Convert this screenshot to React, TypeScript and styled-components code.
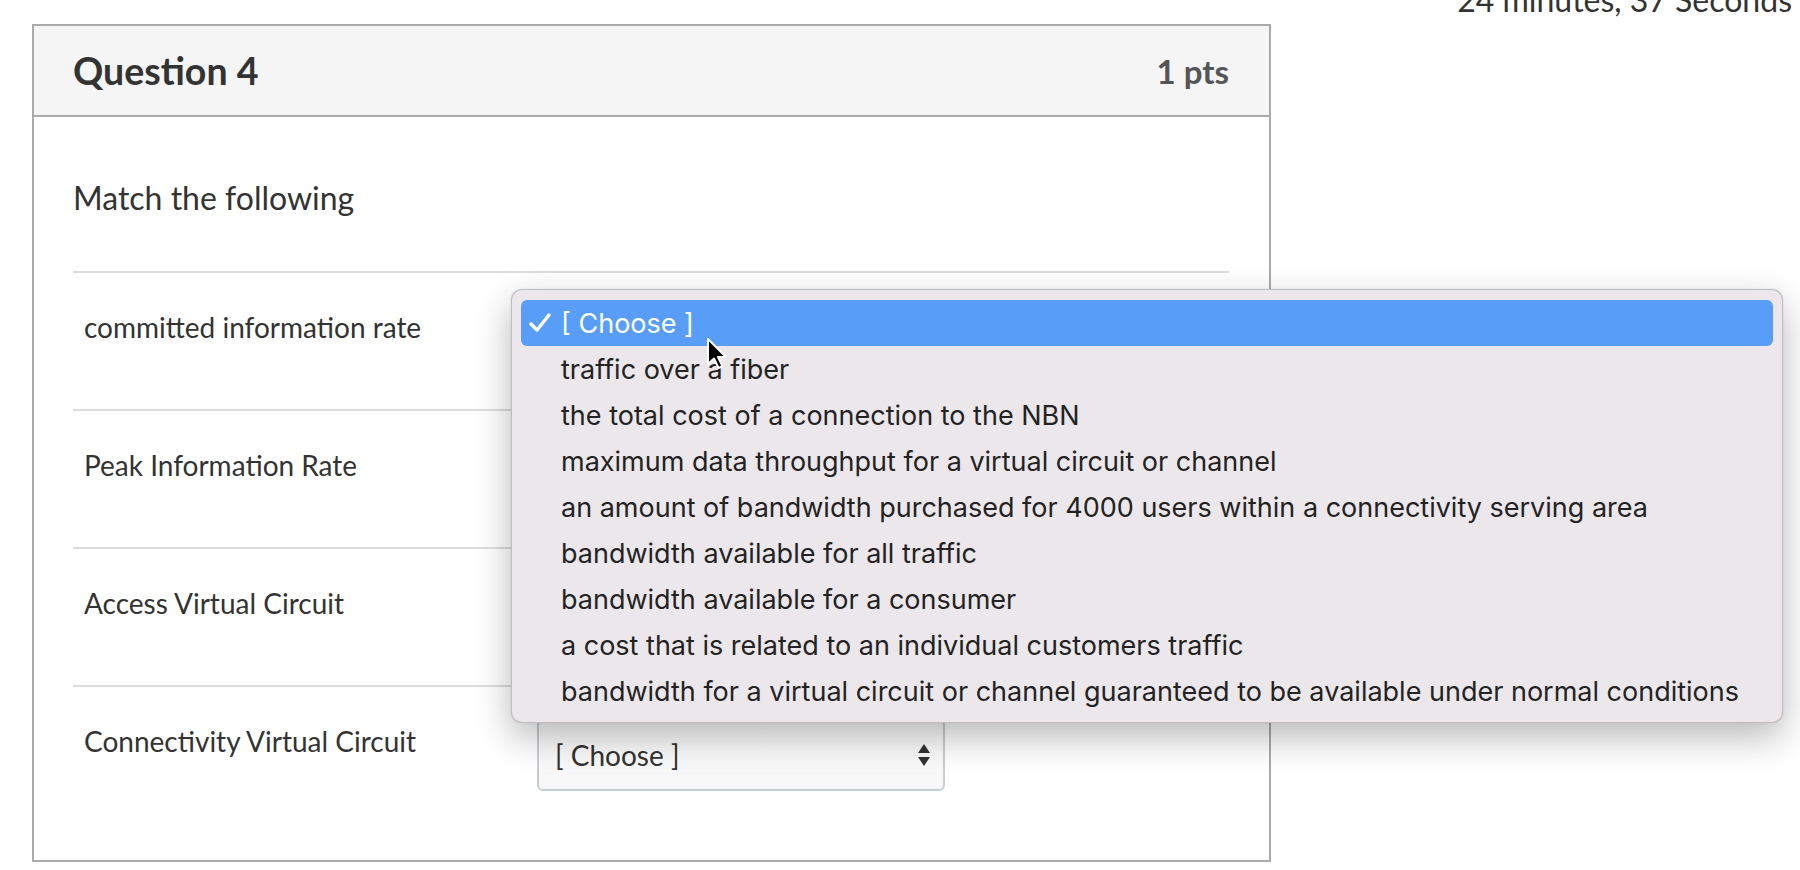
import React from "react";
import styled, { createGlobalStyle } from "styled-components";

const GlobalStyle = createGlobalStyle`
  html, body {
    margin: 0;
    padding: 0;
    background: #fff;
  }
  body {
    font-family: Lato, "Open Sans", sans-serif;
    color: #2d3b45;
  }
`;

type Row = { label: string };

const rows: Row[] = [
  { label: "committed information rate" },
  { label: "Peak Information Rate" },
  { label: "Access Virtual Circuit" },
  { label: "Connectivity Virtual Circuit" },
];

const options = [
  "[ Choose ]",
  "traffic over a fiber",
  "the total cost of a connection to the NBN",
  "maximum data throughput for a virtual circuit or channel",
  "an amount of bandwidth purchased for 4000 users within a connectivity serving area",
  "bandwidth available for all traffic",
  "bandwidth available for a consumer",
  "a cost that is related to an individual customers traffic",
  "bandwidth for a virtual circuit or channel guaranteed to be available under normal conditions",
];

const SelectArrows = () => (
  <svg width="14" height="24" viewBox="0 0 14 24">
    <path d="M7 1 L13 10 L1 10 Z" fill="#333" />
    <path d="M7 23 L13 14 L1 14 Z" fill="#333" />
  </svg>
);

const Check = () => (
  <svg width="22" height="20" viewBox="0 0 22 20">
    <path
      d="M2 11 L8 17 L20 2"
      fill="none"
      stroke="#fff"
      strokeWidth="3.4"
      strokeLinecap="round"
      strokeLinejoin="round"
    />
  </svg>
);

const Pointer = () => (
  <svg width="24" height="34" viewBox="0 0 24 34">
    <path
      d="M2 2 L2 27 L8 21.5 L12.5 31 L16.5 29.2 L12 20 L20 20 Z"
      fill="#000"
      stroke="#fff"
      strokeWidth="2"
      strokeLinejoin="round"
    />
  </svg>
);

export default function App() {
  return (
    <>
      <GlobalStyle />
      <Page>
        <TimerBar>
          <Timer>24 minutes, 37 Seconds</Timer>
        </TimerBar>
        <Card>
          <Header>
            <Title>Question 4</Title>
            <Points>1 pts</Points>
          </Header>
          <Body>
            <Prompt>Match the following</Prompt>
            {rows.map((row, i) => (
              <MatchRow key={row.label}>
                <Label>{row.label}</Label>
                <SelectCell>
                  <SelectBox $covered={i < 3}>
                    <span>[ Choose ]</span>
                    <SelectArrows />
                  </SelectBox>
                  {i === 0 && (
                    <Popup>
                      {options.map((opt, k) => (
                        <Option key={opt} $active={k === 0}>
                          <CheckSlot>{k === 0 && <Check />}</CheckSlot>
                          {opt}
                        </Option>
                      ))}
                      <Cursor>
                        <Pointer />
                      </Cursor>
                    </Popup>
                  )}
                </SelectCell>
              </MatchRow>
            ))}
          </Body>
        </Card>
      </Page>
    </>
  );
}

const Page = styled.div`
  width: 1800px;
  height: 870px;
  overflow: hidden;
  display: flex;
  flex-direction: column;
  padding-left: 32px;
  box-sizing: border-box;
`;

const TimerBar = styled.div`
  height: 24px;
  display: flex;
  justify-content: flex-end;
  align-items: flex-end;
  overflow: hidden;
  padding-right: 8px;
`;

const Timer = styled.div`
  font-size: 32px;
  line-height: 40px;
  margin-bottom: 4px;
  color: #333;
  white-space: nowrap;
`;

const Card = styled.div`
  width: 1239px;
  height: 838px;
  border: 2px solid #aaa;
  box-sizing: border-box;
  display: flex;
  flex-direction: column;
`;

const Header = styled.div`
  height: 89px;
  flex: none;
  background: #f5f5f5;
  border-bottom: 2px solid #aaa;
  display: flex;
  align-items: center;
  justify-content: space-between;
  padding: 0 40px 0 39px;
`;

const Title = styled.h2`
  margin: 0;
  font-size: 37.5px;
  font-weight: 700;
  color: #333;
`;

const Points = styled.div`
  font-size: 33px;
  font-weight: 700;
  color: #555;
`;

const Body = styled.div`
  flex: 1;
  padding: 0 40px 0 39px;
  display: flex;
  flex-direction: column;
`;

const Prompt = styled.p`
  margin: 0;
  height: 154px;
  padding-top: 7px;
  box-sizing: border-box;
  display: flex;
  align-items: center;
  font-size: 32px;
  color: #333;
`;

const MatchRow = styled.div`
  height: 138px;
  flex: none;
  box-sizing: border-box;
  border-top: 2px solid #ddd;
  display: grid;
  grid-template-columns: 453px 408px;
  padding: 32px 0 0 11px;
`;

const Label = styled.div`
  font-size: 28px;
  line-height: 40px;
  padding-top: 2px;
  color: #333;
`;

const SelectCell = styled.div`
  position: relative;
`;

const SelectBox = styled.div<{ $covered: boolean }>`
  height: 72px;
  box-sizing: border-box;
  border: 2px solid #c7cdd1;
  border-radius: 6px;
  background: linear-gradient(#fdfdfd, #f7f7f7);
  display: flex;
  align-items: center;
  justify-content: space-between;
  padding: 0 12px 0 16px;
  font-size: 28px;
  color: #333;
  visibility: ${(p) => (p.$covered ? "hidden" : "visible")};
`;

const Popup = styled.div`
  position: absolute;
  left: -26px;
  top: -16px;
  width: 1272px;
  height: 434px;
  box-sizing: border-box;
  padding: 10px 9px;
  background: #ebe7eb;
  border: 1px solid rgba(0, 0, 0, 0.18);
  border-radius: 11px;
  box-shadow: 0 14px 36px rgba(0, 0, 0, 0.28), 0 0 2px rgba(0, 0, 0, 0.1);
  font-family: Inter, "Noto Sans", sans-serif;
  z-index: 5;
`;

const Option = styled.div<{ $active: boolean }>`
  height: 46px;
  display: flex;
  align-items: center;
  border-radius: 6px;
  font-size: 27px;
  white-space: nowrap;
  color: ${(p) => (p.$active ? "#fff" : "#232323")};
  background: ${(p) => (p.$active ? "#589ef9" : "transparent")};
`;

const CheckSlot = styled.span`
  width: 40px;
  flex: none;
  display: flex;
  justify-content: flex-start;
  padding-left: 8px;
  box-sizing: border-box;
`;

const Cursor = styled.div`
  position: absolute;
  left: 194px;
  top: 47px;
  width: 24px;
  height: 34px;
`;
